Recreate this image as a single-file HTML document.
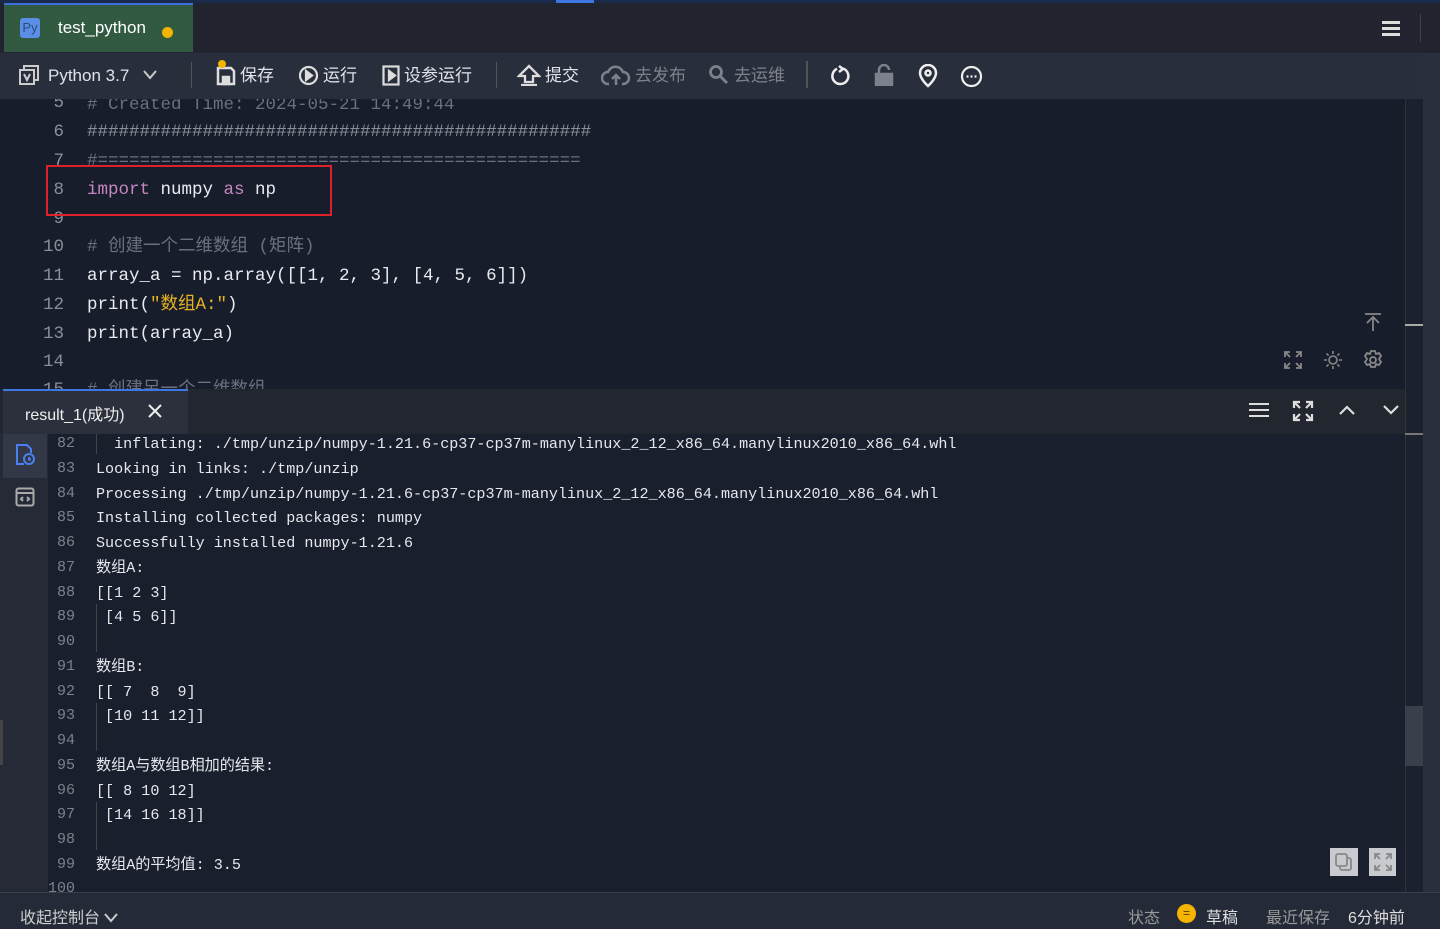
<!DOCTYPE html>
<html><head><meta charset="utf-8"><style>
*{margin:0;padding:0;box-sizing:border-box}
body{width:1440px;height:929px;overflow:hidden;background:#1a1f2e;font-family:"Liberation Sans","Noto Sans CJK SC",sans-serif;position:relative;color:#ddd}
.abs{position:absolute}
.mono{font-family:"Liberation Mono","Noto Sans CJK SC",monospace}
#top{left:0;top:0;width:1440px;height:53px;background:#21242f;border-top:3px solid #1a2a4a}
#tab{left:4px;top:3px;width:189px;height:49px;background:#315a41;border-top:2px solid #3d6fd8}
#tb{left:0;top:53px;width:1440px;height:46px;background:#292e3d}
.ti{position:absolute;top:64px;font-size:17px;line-height:24px;color:#e0e3ea;white-space:nowrap}
.ti svg{vertical-align:-5px;margin-right:4px}
.dim{color:#7d818b}
#ed{left:0;top:99px;width:1405px;height:290px;background:#181d2c;overflow:hidden}
.ln{position:absolute;left:40px;width:24px;text-align:right;color:#8a8f9a;font-size:17.5px;line-height:22px}
.cd{position:absolute;left:87px;font-size:17.5px;line-height:22px;white-space:pre;color:#e8eaf0}
#ctab{left:0;top:389px;width:1405px;height:45px;background:#22262f}
#con{left:48px;top:434px;width:1357px;height:458px;background:#1a1f2e;overflow:hidden}
.cn{position:absolute;left:0;width:27px;text-align:right;color:#7d818b;font-size:15px;line-height:20px}
.cc{position:absolute;left:48px;font-size:15.1px;line-height:20px;white-space:pre;color:#e6e8ee}
#side{left:0;top:434px;width:48px;height:458px;background:#262a36}
#bot{left:0;top:892px;width:1440px;height:37px;background:#252a38;border-top:1px solid #3a3f4c}
</style></head><body>
<div id="top" class="abs"></div>
<div class="abs" style="left:556px;top:0;width:38px;height:3px;background:#3d78e0"></div>
<div id="tab" class="abs">
 <div class="abs" style="left:16px;top:13px;width:20px;height:20px;background:#5b8ee6;border-radius:3px;color:#2a4a80;font-size:13px;text-align:center;line-height:20px">Py</div>
 <div class="abs" style="left:54px;top:13px;font-size:17px;color:#fff">test_python</div>
 <div class="abs" style="left:158px;top:22px;width:11px;height:11px;border-radius:50%;background:#f5b400"></div>
</div>
<div class="abs" style="left:1382px;top:21px;width:18px;height:3px;background:#ddd;box-shadow:0 6px 0 #ddd,0 12px 0 #ddd"></div>
<div class="abs" style="left:1420px;top:14px;width:1px;height:28px;background:#444"></div>
<div id="tb" class="abs"></div>
<div class="ti" style="left:18px"><svg width="22" height="22" viewBox="0 0 22 22" fill="none" stroke="#ccc" stroke-width="2"><rect x="6" y="2" width="14" height="14"/><rect x="2" y="6" width="14" height="14" fill="#292e3d"/><path d="M6 10l3 6 3-6"/></svg><span style="margin-left:4px">Python 3.7</span> &nbsp;&nbsp;<svg width="14" height="10" viewBox="0 0 14 10" fill="none" stroke="#ccc" stroke-width="2" style="vertical-align:1px"><path d="M1 1l6 7 6-7"/></svg></div>
<div class="abs" style="left:191px;top:62px;width:1px;height:26px;background:#555"></div>
<div class="ti" style="left:216px"><svg width="20" height="20" viewBox="0 0 20 20" fill="none" stroke="#ddd" stroke-width="2.5"><path d="M2 2h13l3 3v13H2z"/><rect x="7" y="11" width="6" height="7" fill="#ddd"/></svg>保存</div>
<div class="abs" style="left:218px;top:60px;width:8px;height:8px;border-radius:50%;background:#f5b400"></div>
<div class="ti" style="left:298px"><svg width="21" height="21" viewBox="0 0 21 21" fill="none" stroke="#ddd" stroke-width="2.2"><circle cx="10.5" cy="10.5" r="8.5"/><path d="M8 6v9l6-4.5z" fill="#ddd"/></svg>运行</div>
<div class="ti" style="left:382px"><svg width="18" height="21" viewBox="0 0 18 21" fill="none" stroke="#ddd" stroke-width="2.2"><rect x="1.5" y="1.5" width="15" height="18"/><path d="M7 6v9l6-4.5z" fill="#ddd"/></svg>设参运行</div>
<div class="abs" style="left:496px;top:62px;width:1px;height:26px;background:#555"></div>
<div class="ti" style="left:517px"><svg width="24" height="22" viewBox="0 0 24 22" fill="none" stroke="#ddd" stroke-width="2.3"><path d="M12 2L2 12h6v6h8v-6h6z"/><path d="M4 21h16"/></svg>提交</div>
<div class="ti dim" style="left:601px"><svg width="30" height="22" viewBox="0 0 30 22" fill="none" stroke="#7d818b" stroke-width="2.5"><path d="M8 20H7a6 6 0 010-12 8 8 0 0115 0 6 6 0 010 12h-1"/><path d="M15 21v-9M11 15l4-4 4 4"/></svg>去发布</div>
<div class="ti dim" style="left:708px"><svg width="22" height="22" viewBox="0 0 22 22" fill="none" stroke="#7d818b" stroke-width="2.8"><circle cx="8" cy="8" r="5.5"/><path d="M12 12l7 7"/></svg>去运维</div>
<div class="abs" style="left:806px;top:61px;width:2px;height:27px;background:#555"></div>
<svg class="abs" style="left:829px;top:65px" width="22" height="22" viewBox="0 0 22 22" fill="none" stroke="#eee" stroke-width="2.5"><path d="M14 3.5A8 8 0 1 1 8 3.8"/><path d="M10 1l4 3-4 3" /></svg>
<svg class="abs" style="left:874px;top:64px" width="20" height="22" viewBox="0 0 20 22" fill="none" stroke="#7d818b" stroke-width="2.5"><path d="M5 10V6a5 5 0 0110 0"/><rect x="2" y="10" width="16" height="11" fill="#7d818b"/></svg>
<svg class="abs" style="left:917px;top:64px" width="22" height="24" viewBox="0 0 22 24" fill="none" stroke="#eee" stroke-width="2.5"><path d="M11 22s-8-7-8-13a8 8 0 0116 0c0 6-8 13-8 13z"/><circle cx="11" cy="9" r="2.5"/></svg>
<svg class="abs" style="left:960px;top:65px" width="23" height="23" viewBox="0 0 23 23" fill="none" stroke="#eee" stroke-width="2.2"><circle cx="11.5" cy="11.5" r="9.5"/><path d="M6.5 11.5h2M10.5 11.5h2M14.5 11.5h2"/></svg>

<div id="ed" class="abs mono">
 <div class="ln" style="top:-7px">5</div><div class="cd" style="top:-5px;color:#6b7080"># Created Time: 2024-05-21 14:49:44</div>
 <div class="ln" style="top:22px">6</div><div class="cd" style="top:22px;color:#8a8f9a">################################################</div>
 <div class="ln" style="top:51px">7</div><div class="cd" style="top:51px;color:#6b7080">#==============================================</div>
 <div class="ln" style="top:80px">8</div><div class="cd" style="top:80px"><span style="color:#c586c0">import</span> numpy <span style="color:#c586c0">as</span> np</div>
 <div class="ln" style="top:109px">9</div>
 <div class="ln" style="top:137px">10</div><div class="cd" style="top:137px;color:#6b7080"># 创建一个二维数组 (矩阵)</div>
 <div class="ln" style="top:166px">11</div><div class="cd" style="top:166px">array_a = np.array([[1, 2, 3], [4, 5, 6]])</div>
 <div class="ln" style="top:195px">12</div><div class="cd" style="top:195px">print(<span style="color:#e6b422">"数组A:"</span>)</div>
 <div class="ln" style="top:224px">13</div><div class="cd" style="top:224px">print(array_a)</div>
 <div class="ln" style="top:252px">14</div>
 <div class="ln" style="top:280px">15</div><div class="cd" style="top:280px;color:#6b7080"># 创建另一个二维数组</div>
</div>
<div class="abs" style="left:46px;top:165px;width:286px;height:51px;border:2px solid #e0202a"></div>
<div class="abs" style="left:1405px;top:99px;width:18px;height:793px;background:#1c2130;border-left:1px solid #333"></div>
<div class="abs" style="left:1423px;top:53px;width:17px;height:876px;background:#2a2f3d"></div>
<div class="abs" style="left:1405px;top:324px;width:18px;height:2px;background:#aaa"></div>
<svg class="abs" style="left:1363px;top:312px" width="20" height="20" viewBox="0 0 20 20" fill="none" stroke="#888" stroke-width="1.8"><path d="M2 2h16M10 19V5M4 11l6-6 6 6"/></svg>
<svg class="abs" style="left:1283px;top:350px" width="20" height="20" viewBox="0 0 20 20" fill="none" stroke="#888" stroke-width="1.8"><path d="M2 7V2h5M2 2l5 5M18 7V2h-5M18 2l-5 5M2 13v5h5M2 18l5-5M18 13v5h-5M18 18l-5-5"/></svg>
<svg class="abs" style="left:1323px;top:350px" width="20" height="20" viewBox="0 0 20 20" fill="none" stroke="#888" stroke-width="1.6"><circle cx="10" cy="10" r="4"/><path d="M10 1v3M10 16v3M1 10h3M16 10h3M3.6 3.6l2 2M14.4 14.4l2 2M3.6 16.4l2-2M14.4 5.6l2-2"/></svg>
<svg class="abs" style="left:1363px;top:350px" width="20" height="20" viewBox="0 0 20 20" fill="none" stroke="#888" stroke-width="1.8"><path d="M8 1h4l1 3 3-1 2 3-2 3 2 3-2 3-3-1-1 3H8l-1-3-3 1-2-3 2-3-2-3 2-3 3 1z"/><circle cx="10" cy="10" r="3"/></svg>

<div id="ctab" class="abs">
 <div class="abs" style="left:3px;top:0;width:185px;height:45px;background:#2c303c;border-top:2px solid #3d78e0"></div>
 <div class="abs" style="left:25px;top:12px;font-size:16px;color:#eee">result_1(成功)</div>
 <svg class="abs" style="left:148px;top:15px" width="14" height="14" viewBox="0 0 14 14" stroke="#eee" stroke-width="2"><path d="M1 1l12 12M13 1L1 13"/></svg>
 <div class="abs" style="left:1249px;top:14px;width:20px;height:2px;background:#ddd;box-shadow:0 6px 0 #ddd,0 12px 0 #ddd"></div>
 <svg class="abs" style="left:1292px;top:11px" width="22" height="22" viewBox="0 0 22 22" fill="none" stroke="#ddd" stroke-width="2.2"><path d="M2 8V2h6M2 2l6 6M20 8V2h-6M20 2l-6 6M2 14v6h6M2 20l6-6M20 14v6h-6M20 20l-6-6"/></svg>
 <svg class="abs" style="left:1338px;top:15px" width="18" height="12" viewBox="0 0 18 12" fill="none" stroke="#ddd" stroke-width="2.2"><path d="M2 10l7-7 7 7"/></svg>
 <svg class="abs" style="left:1382px;top:15px" width="18" height="12" viewBox="0 0 18 12" fill="none" stroke="#ddd" stroke-width="2.2"><path d="M2 2l7 7 7-7"/></svg>
</div>
<div class="abs" style="left:1405px;top:433px;width:18px;height:2px;background:#777"></div>
<div class="abs" style="left:1405px;top:706px;width:18px;height:60px;background:#3a3f4c"></div>
<div id="side" class="abs">
 <div class="abs" style="left:3px;top:0;width:44px;height:44px;background:#333848"></div>
 <svg class="abs" style="left:14px;top:9px" width="22" height="24" viewBox="0 0 22 24" fill="none" stroke="#4a7ff0" stroke-width="2"><path d="M10 21H3V2h10l4 4v4"/><circle cx="15" cy="16" r="5"/><path d="M15 14v2.5h2"/></svg>
 <svg class="abs" style="left:15px;top:53px" width="20" height="20" viewBox="0 0 20 20" fill="none" stroke="#aaa" stroke-width="2"><rect x="1.5" y="1.5" width="17" height="17" rx="2"/><path d="M1.5 6h17M8 10l-2 2 2 2M12 10l2 2-2 2"/></svg>
</div>
<div class="abs" style="left:0;top:720px;width:3px;height:45px;background:#444"></div>
<div id="con" class="abs mono">
 <div class="abs" style="left:48px;top:0;width:1px;height:20px;background:#444"></div>
 <div class="cn" style="top:0px">82</div><div class="cc" style="top:0px">  inflating: ./tmp/unzip/numpy-1.21.6-cp37-cp37m-manylinux_2_12_x86_64.manylinux2010_x86_64.whl</div>
 <div class="cn" style="top:25px">83</div><div class="cc" style="top:25px">Looking in links: ./tmp/unzip</div>
 <div class="cn" style="top:50px">84</div><div class="cc" style="top:50px">Processing ./tmp/unzip/numpy-1.21.6-cp37-cp37m-manylinux_2_12_x86_64.manylinux2010_x86_64.whl</div>
 <div class="cn" style="top:74px">85</div><div class="cc" style="top:74px">Installing collected packages: numpy</div>
 <div class="cn" style="top:99px">86</div><div class="cc" style="top:99px">Successfully installed numpy-1.21.6</div>
 <div class="cn" style="top:124px">87</div><div class="cc" style="top:124px">数组A:</div>
 <div class="cn" style="top:149px">88</div><div class="cc" style="top:149px">[[1 2 3]</div>
 <div class="abs" style="left:48px;top:170px;width:1px;height:48px;background:#444"></div>
 <div class="cn" style="top:173px">89</div><div class="cc" style="top:173px"> [4 5 6]]</div>
 <div class="cn" style="top:198px">90</div>
 <div class="cn" style="top:223px">91</div><div class="cc" style="top:223px">数组B:</div>
 <div class="cn" style="top:248px">92</div><div class="cc" style="top:248px">[[ 7  8  9]</div>
 <div class="abs" style="left:48px;top:269px;width:1px;height:48px;background:#444"></div>
 <div class="cn" style="top:272px">93</div><div class="cc" style="top:272px"> [10 11 12]]</div>
 <div class="cn" style="top:297px">94</div>
 <div class="cn" style="top:322px">95</div><div class="cc" style="top:322px">数组A与数组B相加的结果:</div>
 <div class="cn" style="top:347px">96</div><div class="cc" style="top:347px">[[ 8 10 12]</div>
 <div class="abs" style="left:48px;top:368px;width:1px;height:48px;background:#444"></div>
 <div class="cn" style="top:371px">97</div><div class="cc" style="top:371px"> [14 16 18]]</div>
 <div class="cn" style="top:396px">98</div>
 <div class="cn" style="top:421px">99</div><div class="cc" style="top:421px">数组A的平均值: 3.5</div>
 <div class="cn" style="top:445px">100</div>
</div>
<div class="abs" style="left:1330px;top:848px;width:28px;height:28px;background:#c8cad0"></div>
<div class="abs" style="left:1369px;top:848px;width:27px;height:28px;background:#c8cad0"></div>
<svg class="abs" style="left:1334px;top:852px" width="20" height="20" viewBox="0 0 20 20" fill="none" stroke="#888" stroke-width="1.8"><rect x="2" y="2" width="11" height="12" rx="2"/><path d="M13 6h2a2 2 0 012 2v8a2 2 0 01-2 2H8a2 2 0 01-2-2v-2"/></svg>
<svg class="abs" style="left:1373px;top:852px" width="20" height="20" viewBox="0 0 20 20" fill="none" stroke="#888" stroke-width="1.8"><path d="M2 7V2h5M2 2l5 5M18 7V2h-5M18 2l-5 5M2 13v5h5M2 18l5-5M18 13v5h-5M18 18l-5-5"/></svg>
<div id="bot" class="abs">
 <div class="abs" style="left:20px;top:11px;font-size:16px;color:#ccc">收起控制台 <svg width="14" height="10" viewBox="0 0 14 10" fill="none" stroke="#ccc" stroke-width="2"><path d="M1 1l6 7 6-7"/></svg></div>
 <div class="abs" style="left:1128px;top:11px;font-size:16px;color:#999">状态</div>
 <div class="abs" style="left:1177px;top:11px;width:19px;height:19px;border-radius:50%;background:#f5b400;color:#5a3c00;font-size:12px;text-align:center;line-height:19px">=</div>
 <div class="abs" style="left:1206px;top:11px;font-size:16px;color:#ddd">草稿</div>
 <div class="abs" style="left:1266px;top:11px;font-size:16px;color:#999">最近保存</div>
 <div class="abs" style="left:1348px;top:11px;font-size:16px;color:#ddd">6分钟前</div>
</div>
</body></html>
